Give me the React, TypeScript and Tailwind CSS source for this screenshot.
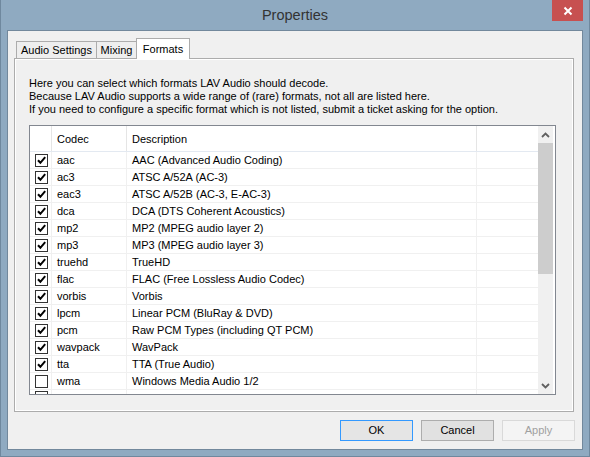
import React from "react";

type Row = { codec: string; desc: string; on: boolean };

const rows: Row[] = [
  { codec: "aac", desc: "AAC (Advanced Audio Coding)", on: true },
  { codec: "ac3", desc: "ATSC A/52A (AC-3)", on: true },
  { codec: "eac3", desc: "ATSC A/52B (AC-3, E-AC-3)", on: true },
  { codec: "dca", desc: "DCA (DTS Coherent Acoustics)", on: true },
  { codec: "mp2", desc: "MP2 (MPEG audio layer 2)", on: true },
  { codec: "mp3", desc: "MP3 (MPEG audio layer 3)", on: true },
  { codec: "truehd", desc: "TrueHD", on: true },
  { codec: "flac", desc: "FLAC (Free Lossless Audio Codec)", on: true },
  { codec: "vorbis", desc: "Vorbis", on: true },
  { codec: "lpcm", desc: "Linear PCM (BluRay & DVD)", on: true },
  { codec: "pcm", desc: "Raw PCM Types (including QT PCM)", on: true },
  { codec: "wavpack", desc: "WavPack", on: true },
  { codec: "tta", desc: "TTA (True Audio)", on: true },
  { codec: "wma", desc: "Windows Media Audio 1/2", on: false },
];

function Check({ on }: { on: boolean }) {
  return (
    <div className="w-[13px] h-[13px] shrink-0 border border-[#333333] bg-white flex items-center justify-center">
      {on && (
        <svg width="11" height="11" viewBox="0 0 11 11">
          <path d="M2 5.2 L4.4 7.8 L9.2 2.2" fill="none" stroke="#000000" strokeWidth="2" />
        </svg>
      )}
    </div>
  );
}

function Chevron({ up }: { up: boolean }) {
  return (
    <svg width="9" height="6" viewBox="0 0 9 6">
      <path
        d={up ? "M1 5 L4.5 1.5 L8 5" : "M1 1 L4.5 4.5 L8 1"}
        fill="none"
        stroke="#606060"
        strokeWidth="1.8"
      />
    </svg>
  );
}

function Button({ label, kind }: { label: string; kind: "default" | "normal" | "disabled" }) {
  const cls =
    kind === "default"
      ? "border-[#3399FF] bg-[#E5E5E5] text-black"
      : kind === "normal"
      ? "border-[#ADADAD] bg-[#E1E1E1] text-black"
      : "border-[#D9D9D9] bg-[#F4F4F4] text-[#A0A0A0]";
  return (
    <div className={`w-[73px] h-[21px] border flex items-center justify-center ${cls}`}>{label}</div>
  );
}

export default function App() {
  return (
    <div className="w-[590px] h-[457px] bg-[#8FAAC1] border-x border-b border-[#6F889E] flex flex-col font-['Liberation_Sans',Arial,sans-serif] text-[11px] leading-[13px] text-black select-none">
      {/* caption bar */}
      <div className="h-[30px] shrink-0 grid grid-cols-[1fr_auto_1fr] items-center">
        <div />
        <div className="text-[14.5px] leading-[18px] text-[#333333]">Properties</div>
        <div className="self-start justify-self-end mr-[6px] w-[31px] h-[21px] bg-[#C75050] flex items-center justify-center">
          <svg width="10" height="10" viewBox="0 0 10 10" className="mt-[1px]">
            <path d="M1.5 1.5 L8.5 8.5 M8.5 1.5 L1.5 8.5" stroke="#ffffff" strokeWidth="2" />
          </svg>
        </div>
      </div>

      {/* client area */}
      <div className="mx-[6px] h-[420px] border border-[#72889C] bg-[#F0F0F0] flex flex-col">
        <div className="pt-[7px] pl-[6px] pr-[8px] flex flex-col">
          {/* tab headers */}
          <div className="h-[20px] flex items-end pl-[2px]">
            <div className="h-[17px] w-[81px] border-t border-x border-[#ACACAC] bg-[#EEEEEE] flex items-center justify-center">
              Audio Settings
            </div>
            <div className="h-[17px] w-[40px] border-t border-r border-[#ACACAC] bg-[#EEEEEE] flex items-center justify-center">
              Mixing
            </div>
            <div className="relative z-10 -ml-px -mb-px h-[21px] w-[54px] border-t border-x border-[#ACACAC] bg-white flex items-center justify-center">
              Formats
            </div>
          </div>

          {/* tab page */}
          <div className="h-[354px] border border-[#ACACAC] shadow-[inset_0_0_0_1px_#ffffff] flex flex-col pl-[14px] pt-[18px]">
            <div>Here you can select which formats LAV Audio should decode.</div>
            <div>Because LAV Audio supports a wide range of (rare) formats, not all are listed here.</div>
            <div>If you need to configure a specific format which is not listed, submit a ticket asking for the option.</div>

            {/* list view */}
            <div className="mt-[9px] w-[527px] h-[270px] border border-[#828790] bg-white flex overflow-hidden">
              <div className="w-[508px] flex flex-col overflow-hidden">
                <div className="h-[26px] shrink-0 border-b border-[#E3E9F1] flex">
                  <div className="w-[22px] border-r border-[#E5E5E5]" />
                  <div className="w-[75px] border-r border-[#E5E5E5] pl-[5px] pt-[2px] flex items-center">Codec</div>
                  <div className="w-[350px] border-r border-[#E5E5E5] pl-[5px] pt-[2px] flex items-center">Description</div>
                  <div className="flex-1" />
                </div>
                {rows.map((r) => (
                  <div key={r.codec} className="h-[17px] shrink-0 border-b border-[#F0F0F0] flex">
                    <div className="w-[22px] border-r border-[#F0F0F0] pl-[5px] flex items-center">
                      <Check on={r.on} />
                    </div>
                    <div className="w-[75px] border-r border-[#F0F0F0] pl-[5px] flex items-center">{r.codec}</div>
                    <div className="w-[350px] border-r border-[#F0F0F0] pl-[5px] flex items-center whitespace-nowrap">
                      {r.desc}
                    </div>
                    <div className="flex-1" />
                  </div>
                ))}
                {/* next row, scrolled mostly out of view */}
                <div className="h-[17px] shrink-0 flex">
                  <div className="w-[22px] border-r border-[#F0F0F0] pl-[5px] pt-[1px] flex items-start">
                    <Check on={false} />
                  </div>
                  <div className="w-[75px] border-r border-[#F0F0F0]" />
                  <div className="w-[350px] border-r border-[#F0F0F0]" />
                  <div className="flex-1" />
                </div>
              </div>
              {/* vertical scrollbar */}
              <div className="w-[15px] bg-[#F0F0F0] flex flex-col">
                <div className="h-[17px] flex items-center justify-center">
                  <Chevron up />
                </div>
                <div className="h-[131px] bg-[#CDCDCD]" />
                <div className="flex-1" />
                <div className="h-[17px] flex items-center justify-center">
                  <Chevron up={false} />
                </div>
              </div>
              <div className="w-[2px]" />
            </div>
          </div>
        </div>

        {/* dialog buttons */}
        <div className="mt-[8px] pr-[7px] flex justify-end gap-[8px]">
          <Button label="OK" kind="default" />
          <Button label="Cancel" kind="normal" />
          <Button label="Apply" kind="disabled" />
        </div>
      </div>
    </div>
  );
}
